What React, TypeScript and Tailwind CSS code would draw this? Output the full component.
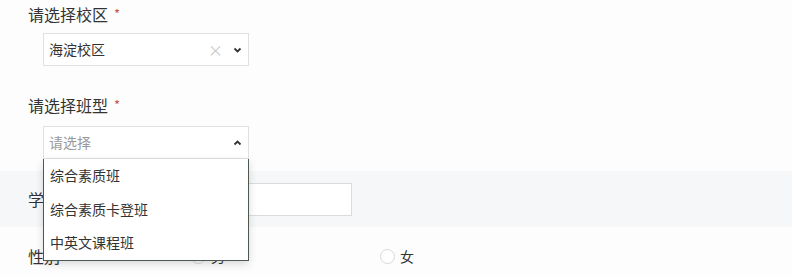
const font = { fontFamily: '"Noto Sans CJK SC", "Noto Sans", sans-serif' };

function Label({ text }: { text: string }) {
  return (
    <div className="flex h-[22px] items-center text-[16px] leading-[22px] text-[#333]">
      {text}
      <span className="ml-[6px] text-[13px] text-[#c8554d]">*</span>
    </div>
  );
}

function Radio({ label }: { label: string }) {
  return (
    <div className="flex items-center gap-[5px]">
      <span className="h-[15px] w-[15px] rounded-full border border-[#d8d8d8] bg-white" />
      <span className="text-[14px] text-[#333]">{label}</span>
    </div>
  );
}

export default function App() {
  const options = ["综合素质班", "综合素质卡登班", "中英文课程班"];
  return (
    <div className="relative h-[275px] w-[792px] overflow-hidden bg-[#fdfdfd]" style={font}>
      <div className="pl-[28px] pt-[3px]">
        <Label text="请选择校区" />
        <div className="ml-[15px] mt-[8px] flex h-[33px] w-[206px] items-center border border-[#e0e0e0] bg-white pl-[5px] pr-[6px] text-[14px] text-[#333]">
          <span className="flex-1">海淀校区</span>
          <span className="mr-[10px] text-[15px] leading-none text-[#c8c8c8]">×</span>
          <svg width="9" height="6" viewBox="0 0 9 6">
            <path d="M1.5 1.5 L4.5 4.5 L7.5 1.5" fill="none" stroke="#333" strokeWidth="1.8" />
          </svg>
        </div>
        <div className="mt-[28px]">
          <Label text="请选择班型" />
        </div>
        <div className="relative ml-[15px] mt-[10px] w-[206px]">
          <div className="flex h-[33px] items-center border border-[#e0e0e0] bg-white pl-[5px] pr-[6px] text-[14px] text-[#999]">
            <span className="flex-1">请选择</span>
            <svg width="9" height="6" viewBox="0 0 9 6">
              <path d="M1.5 4.5 L4.5 1.5 L7.5 4.5" fill="none" stroke="#333" strokeWidth="1.8" />
            </svg>
          </div>
          <div className="absolute left-0 top-[33px] z-10 w-[206px] border border-t-0 border-[#4f584f] bg-white shadow-[0_3px_8px_rgba(0,0,0,0.15)]">
            {options.map((o) => (
              <div key={o} className="flex h-[33.5px] items-center pl-[6px] text-[14px] text-[#333]">
                {o}
              </div>
            ))}
          </div>
        </div>
      </div>
      <div className="mt-[12px] flex h-[56px] items-center bg-[#f6f7f9] pl-[28px]">
        <span className="w-[80px] text-[16px] text-[#333]">学号</span>
        <div className="ml-[140px] h-[33px] w-[104px] border border-[#dcdcdc] bg-white" />
      </div>
      <div className="flex h-[58px] items-center pl-[28px]">
        <span className="w-[163px] text-[16px] text-[#333]">性别</span>
        <Radio label="男" />
        <div className="ml-[155px]">
          <Radio label="女" />
        </div>
      </div>
    </div>
  );
}
